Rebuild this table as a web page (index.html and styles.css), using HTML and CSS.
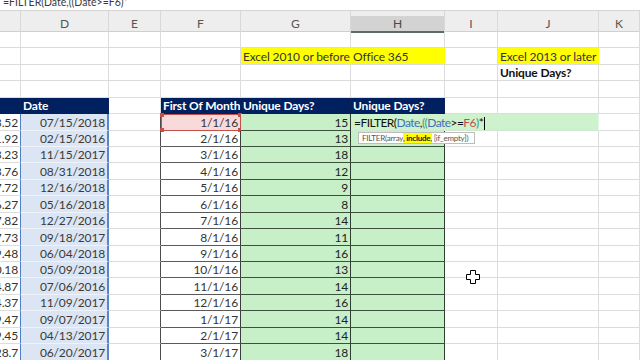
FILE: index.html
```html
<!DOCTYPE html>
<html>
<head>
<meta charset="utf-8">
<link rel="stylesheet" href="styles.css">
</head>
<body>
<div class="app">
  <div class="fbar"><span class="ftext">=FILTER(Date,((Date&gt;=F6)*</span></div>
  <div class="hdr">
    <div class="h"></div>
    <div class="h">D</div>
    <div class="h">E</div>
    <div class="h">F</div>
    <div class="h">G</div>
    <div class="h sel"><span>H</span></div>
    <div class="h">I</div>
    <div class="h">J</div>
    <div class="h">K</div>
  </div>
  <div class="sheet">
    <!-- row 1 -->
    <div class="c"></div><div class="c"></div><div class="c"></div><div class="c"></div><div class="c"></div><div class="c"></div><div class="c"></div><div class="c"></div><div class="c"></div>
    <!-- row 2 -->
    <div class="c"></div><div class="c"></div><div class="c"></div><div class="c"></div><div class="c yel">Excel 2010 or before</div><div class="c yel">Office 365</div><div class="c"></div><div class="c yel">Excel 2013 or later</div><div class="c"></div>
    <!-- row 3 -->
    <div class="c"></div><div class="c"></div><div class="c"></div><div class="c"></div><div class="c"></div><div class="c"></div><div class="c"></div><div class="c b">Unique Days?</div><div class="c"></div>
    <!-- row 4 -->
    <div class="c"></div><div class="c"></div><div class="c"></div><div class="c"></div><div class="c"></div><div class="c"></div><div class="c"></div><div class="c"></div><div class="c"></div>
    <!-- row 5 -->
    <div class="c navy"></div><div class="c navy">Date</div><div class="c"></div><div class="c navy">First Of Month</div><div class="c navy">Unique Days?</div><div class="c navy">Unique Days?</div><div class="c"></div><div class="c"></div><div class="c"></div>
    <!-- row 6 -->
    <div class="c r cv">13.52</div><div class="c r dt">07/15/2018</div><div class="c ee"></div><div class="c r fm f6">1/1/16<i class="hd tl"></i><i class="hd bl"></i><i class="hd tr"></i><i class="hd br"></i></div><div class="c r gn">15</div>
    <div class="c edit"><span class="k">=FILTER(</span><span class="bl1">Date</span><span class="k">,</span><span class="gp">((</span><span class="bl1">Date</span><span class="k">&gt;=</span><span class="rd">F6</span><span class="gp">)</span><span class="k">*</span><i class="caret"></i></div>
    <div class="c"></div>
    <!-- row 7 -->
    <div class="c r cv">11.92</div><div class="c r dt">02/15/2016</div><div class="c ee"></div><div class="c r fm">2/1/16</div><div class="c r gn">13</div><div class="c gn hh"></div><div class="c"></div><div class="c"></div><div class="c"></div>
    <!-- row 8 -->
    <div class="c r cv">13.23</div><div class="c r dt">11/15/2017</div><div class="c ee"></div><div class="c r fm">3/1/16</div><div class="c r gn">18</div><div class="c gn hh"></div><div class="c"></div><div class="c"></div><div class="c"></div>
    <!-- row 9 -->
    <div class="c r cv">13.76</div><div class="c r dt">08/31/2018</div><div class="c ee"></div><div class="c r fm">4/1/16</div><div class="c r gn">12</div><div class="c gn hh"></div><div class="c"></div><div class="c"></div><div class="c"></div>
    <!-- row 10 -->
    <div class="c r cv">17.72</div><div class="c r dt">12/16/2018</div><div class="c ee"></div><div class="c r fm">5/1/16</div><div class="c r gn">9</div><div class="c gn hh"></div><div class="c"></div><div class="c"></div><div class="c"></div>
    <!-- row 11 -->
    <div class="c r cv">16.27</div><div class="c r dt">05/16/2018</div><div class="c ee"></div><div class="c r fm">6/1/16</div><div class="c r gn">8</div><div class="c gn hh"></div><div class="c"></div><div class="c"></div><div class="c"></div>
    <!-- row 12 -->
    <div class="c r cv">17.82</div><div class="c r dt">12/27/2016</div><div class="c ee"></div><div class="c r fm">7/1/16</div><div class="c r gn">14</div><div class="c gn hh"></div><div class="c"></div><div class="c"></div><div class="c"></div>
    <!-- row 13 -->
    <div class="c r cv">17.73</div><div class="c r dt">09/18/2017</div><div class="c ee"></div><div class="c r fm">8/1/16</div><div class="c r gn">11</div><div class="c gn hh"></div><div class="c"></div><div class="c"></div><div class="c"></div>
    <!-- row 14 -->
    <div class="c r cv">19.48</div><div class="c r dt">06/04/2018</div><div class="c ee"></div><div class="c r fm">9/1/16</div><div class="c r gn">16</div><div class="c gn hh"></div><div class="c"></div><div class="c"></div><div class="c"></div>
    <!-- row 15 -->
    <div class="c r cv">10.18</div><div class="c r dt">05/09/2018</div><div class="c ee"></div><div class="c r fm">10/1/16</div><div class="c r gn">13</div><div class="c gn hh"></div><div class="c"></div><div class="c"></div><div class="c"></div>
    <!-- row 16 -->
    <div class="c r cv">14.87</div><div class="c r dt">07/06/2016</div><div class="c ee"></div><div class="c r fm">11/1/16</div><div class="c r gn">14</div><div class="c gn hh"></div><div class="c"></div><div class="c"></div><div class="c"></div>
    <!-- row 17 -->
    <div class="c r cv">14.37</div><div class="c r dt">11/09/2017</div><div class="c ee"></div><div class="c r fm">12/1/16</div><div class="c r gn">16</div><div class="c gn hh"></div><div class="c"></div><div class="c"></div><div class="c"></div>
    <!-- row 18 -->
    <div class="c r cv">19.47</div><div class="c r dt">09/07/2017</div><div class="c ee"></div><div class="c r fm">1/1/17</div><div class="c r gn">14</div><div class="c gn hh"></div><div class="c"></div><div class="c"></div><div class="c"></div>
    <!-- row 19 -->
    <div class="c r cv">19.45</div><div class="c r dt">04/13/2017</div><div class="c ee"></div><div class="c r fm">2/1/17</div><div class="c r gn">14</div><div class="c gn hh"></div><div class="c"></div><div class="c"></div><div class="c"></div>
    <!-- row 20 -->
    <div class="c r cv">128.7</div><div class="c r dt">06/20/2017</div><div class="c ee"></div><div class="c r fm">3/1/17</div><div class="c r gn">18</div><div class="c gn hh"></div><div class="c"></div><div class="c"></div><div class="c"></div>
  </div>
  <div class="tip">FILTER(array<span class="hl">, <b>include</b>,</span> [if_empty])</div>
  <svg class="cursor" width="14" height="14" viewBox="0 0 14 14">
    <path d="M4.5 0.5h5v4h4v5h-4v4h-5v-4h-4v-5h4z" fill="#fff" stroke="#000" stroke-width="1"/>
  </svg>
</div>
</body>
</html>
```

FILE: styles.css
```css
* { box-sizing: border-box; }
html, body { margin: 0; padding: 0; background: #fff; }
.app {
  position: relative;
  width: 640px;
  height: 360px;
  overflow: hidden;
  font-family: Lato, "Open Sans", sans-serif;
  font-size: 12px;
  color: #262626;
}
.fbar {
  height: 11px;
  background: #fff;
  border-bottom: 1px solid #d4d4d4;
  overflow: hidden;
  padding-left: 3px;
}
.ftext {
  display: block;
  font-size: 10.5px;
  line-height: 10px;
  margin-top: -3px;
  color: #3a3a3a;
}
.hdr {
  display: grid;
  grid-template-columns: 21px 88px 52px 80px 110px 94px 53px 101px 41px;
  height: 21px;
  background: #eeeeee;
  border-bottom: 1px solid #cfcfcf;
}
.h {
  border-right: 1px solid #d8d8d8;
  display: flex;
  align-items: center;
  justify-content: center;
  padding-top: 3px;
  color: #555;
  font-size: 12px;
}
.h.sel {
  padding-top: 5px;
  align-items: stretch;
}
.h.sel span {
  flex: 1;
  background: #d3d3d3;
  border-bottom: 2px solid #5d6b63;
  display: flex;
  align-items: center;
  justify-content: center;
  color: #3f4f44;
}
.sheet {
  display: grid;
  grid-template-columns: 21px 88px 52px 80px 110px 94px 53px 101px 41px;
  grid-template-rows: 16px 17px 16px 17px 16px 17px 16px 16px 17px 16px 17px 16px 17px 16px 16px 17px 16px 17px 16px 17px;
}
.c {
  position: relative;
  border-right: 1px solid #dcdcdc;
  border-bottom: 1px solid #dcdcdc;
  display: flex;
  align-items: flex-end;
  padding: 0 2px 0;
  line-height: 14px;
  white-space: nowrap;
  overflow: hidden;
  letter-spacing: -0.15px;
}
.r { justify-content: flex-end; }
.b { font-weight: bold; color: #111; }
.yel { background: #ffff00; border-right-color: #ffff00; color: #333; }
.navy {
  background: #002060;
  border-right-color: #0b2157;
  border-bottom-color: #002060;
  color: #fff;
  font-weight: bold;
}
.cv { color: #333; border-right: 1px solid #4f7fc4; overflow: hidden; }
.dt {
  background: #dbe5f3;
  border-right: 2px solid #5a86c8;
  border-bottom-color: #eef3fa;
  color: #3a3a3a;
}
.ee { border-right-color: #4c4c4c; }
.fm {
  border-right-color: #3c3c3c;
  border-bottom-color: #5a5a5a;
  color: #333;
}
.f6 {
  overflow: visible;
  background: #f9dada;
  border: 1px solid #c4504c;
  border-left-color: #c4504c;
}
.hd {
  position: absolute;
  width: 4px;
  height: 4px;
  background: #c4504c;
}
.tl { left: -2px; top: -2px; }
.bl { left: -2px; bottom: -2px; }
.tr { right: -2px; top: -2px; }
.br { right: -2px; bottom: -2px; }
.gn {
  background: #c8f0c8;
  border-right-color: #2f3f2f;
  border-bottom-color: #3f503f;
  color: #222;
}
.hh { border-right-color: #2f3f2f; }
.edit {
  grid-column: span 3;
  background: #cdf2cd;
  border-right-color: #e4f5e4;
  border-bottom-color: #cfe8cf;
  padding-left: 3px;
  font-size: 12px;
  letter-spacing: -0.55px;
  overflow: visible;
}
.k { color: #111; }
.bl1 { color: #3f6fb8; }
.gp { color: #3f9a72; }
.rd { color: #c0504d; }
.caret {
  display: inline-block;
  width: 1px;
  height: 13px;
  background: #000;
  margin-left: 1px;
  margin-bottom: 0;
}
.tip {
  position: absolute;
  left: 358px;
  top: 132px;
  width: 117px;
  height: 12px;
  background: #fff;
  border: 1px solid #bdbdbd;
  font-size: 8px;
  line-height: 10px;
  color: #555;
  padding-left: 3px;
  white-space: nowrap;
  letter-spacing: -0.25px;
}
.tip .hl { background: #ffff00; color: #333; }
.tip b { color: #222; }
.cursor {
  position: absolute;
  left: 466px;
  top: 270px;
}
```
